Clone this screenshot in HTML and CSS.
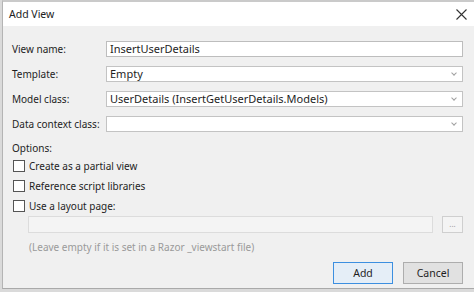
FILE: index.html
```html
<!DOCTYPE html>
<html lang="en">
<head>
  <meta charset="UTF-8">
  <title>Add View</title>
  <link rel="stylesheet" href="styles.css">
</head>
<body>
  <div class="window">
    <div class="titlebar">
      <span class="title">Add View</span>
      <svg class="close" width="11" height="11" viewBox="0 0 11 11">
        <path d="M0.5 0.5 L10.5 10.5 M10.5 0.5 L0.5 10.5" stroke="#333" stroke-width="1.1" fill="none"/>
      </svg>
    </div>

    <div class="content">
      <div class="form">
        <label>View name:</label>
        <div class="field">InsertUserDetails</div>

        <label>Template:</label>
        <div class="field select">Empty<span class="arrow"></span></div>

        <label>Model class:</label>
        <div class="field select">UserDetails (InsertGetUserDetails.Models)<span class="arrow"></span></div>

        <label>Data context class:</label>
        <div class="field select"><span class="arrow"></span></div>
      </div>

      <div class="options-label">Options:</div>
      <div class="check-row"><span class="box"></span>Create as a partial view</div>
      <div class="check-row"><span class="box"></span>Reference script libraries</div>
      <div class="check-row"><span class="box"></span>Use a layout page:</div>

      <div class="layout-row">
        <div class="field disabled"></div>
        <div class="browse">...</div>
      </div>
      <div class="hint">(Leave empty if it is set in a Razor _viewstart file)</div>

      <div class="buttons">
        <button class="btn default">Add</button>
        <button class="btn">Cancel</button>
      </div>
    </div>
  </div>
</body>
</html>
```

FILE: styles.css
```css
html, body {
  margin: 0;
  padding: 0;
}
body {
  width: 474px;
  height: 292px;
  overflow: hidden;
  background: #dadada;
  font-family: "Noto Sans", "Open Sans", sans-serif;
  font-size: 10px;
  color: #1e1e1e;
}
.window {
  margin-left: 2px;
  border-top: 2px solid #cacaca;
  border-left: 1px solid #b4b4b4;
  border-bottom: 1px solid #a9a9a9;
  background: #f0f0f0;
}
.titlebar {
  height: 24px;
  background: #fff;
  display: flex;
  align-items: center;
  justify-content: space-between;
  padding: 0 7px 0 6px;
}
.title {
  font-size: 10.5px;
  color: #222;
}
.close {
  display: block;
}
.content {
  padding: 15px 11px 4px 9px;
}
.form {
  display: grid;
  grid-template-columns: 94px 1fr;
  grid-auto-rows: 16px;
  row-gap: 9px;
  align-items: center;
}
.field {
  height: 16px;
  box-sizing: border-box;
  border: 1px solid #bdbdbd;
  background: #fff;
  padding: 0 3px;
  font-size: 11px;
  line-height: 14px;
  position: relative;
  white-space: nowrap;
}
.field.select {
  border-color: #c3c3c3;
}
.arrow {
  position: absolute;
  right: 6px;
  top: 4px;
  width: 3px;
  height: 3px;
  border-right: 1px solid #a0a0a0;
  border-bottom: 1px solid #a0a0a0;
  transform: rotate(45deg);
}
.options-label {
  margin-top: 9px;
  padding-bottom: 1px;
  line-height: 14px;
}
.check-row {
  display: flex;
  align-items: center;
  height: 20px;
}
.box {
  width: 10px;
  height: 10px;
  border: 1px solid #555;
  background: #fff;
  margin: 0 4px 0 1px;
}
.layout-row {
  display: flex;
  gap: 9px;
  padding-left: 16px;
}
.field.disabled {
  flex: 1;
  height: 17px;
  background: #f4f4f4;
  border-color: #dcdcdc;
}
.browse {
  width: 21px;
  height: 17px;
  box-sizing: border-box;
  border: 1px solid #cfcfcf;
  background: #f4f4f4;
  color: #9a9a9a;
  font-size: 8px;
  text-align: center;
  line-height: 14px;
}
.hint {
  margin-top: 7px;
  padding-left: 17px;
  line-height: 14px;
  color: #9a9a9a;
}
.buttons {
  display: flex;
  justify-content: flex-end;
  gap: 10px;
  margin-top: 8px;
}
.btn {
  width: 60px;
  height: 22px;
  font-family: inherit;
  font-size: 10.5px;
  color: #1e1e1e;
  background: #e1e1e1;
  border: 1px solid #adadad;
  padding: 0;
}
.btn.default {
  border-color: #3c8fe0;
  background: #e5eef7;
}
```
